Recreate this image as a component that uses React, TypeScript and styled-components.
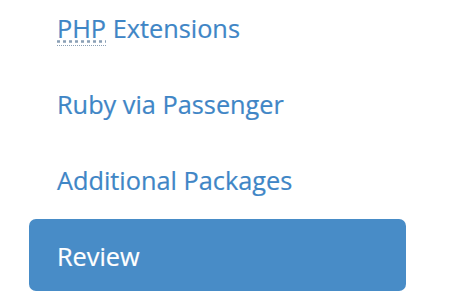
import styled, { createGlobalStyle } from "styled-components";

const GlobalStyle = createGlobalStyle`
  html, body {
    margin: 0;
    padding: 0;
    background: #ffffff;
    overflow: hidden;
  }
  body {
    font-family: "Open Sans", "Liberation Sans", sans-serif;
  }
`;

const steps = [
  { label: "Extensions", abbr: "PHP" },
  { label: "Ruby via Passenger" },
  { label: "Additional Packages" },
  { label: "Review", active: true },
];

function App() {
  return (
    <>
      <GlobalStyle />
      <Nav>
        {steps.map((step) => (
          <Step key={step.label} $active={step.active}>
            <Label>
              {step.abbr && <Abbr title="PHP: Hypertext Preprocessor">{step.abbr}</Abbr>}
              {step.abbr ? " " : ""}
              {step.label}
            </Label>
          </Step>
        ))}
      </Nav>
    </>
  );
}

const Nav = styled.nav`
  display: flex;
  flex-direction: column;
  gap: 4px;
  width: 377px;
  margin: -9px 0 0 29px;
`;

const Step = styled.a<{ $active?: boolean }>`
  display: flex;
  align-items: center;
  height: 72px;
  box-sizing: border-box;
  padding: 1px 0 0 28px;
  border-radius: 7px;
  font-size: 25.3px;
  font-weight: 400;
  text-decoration: none;
  cursor: pointer;
  color: ${(p) => (p.$active ? "#ffffff" : "#3f86c6")};
  background: ${(p) => (p.$active ? "#488cc7" : "transparent")};
`;

const Label = styled.span`
  white-space: pre;
  -webkit-text-stroke: 0.2px currentColor;
`;

const Abbr = styled.abbr`
  text-decoration: underline dotted #8a9fb5;
  text-underline-offset: 3px;
  border-bottom: 1px dotted #8a9fb5;
`;

export default App;
